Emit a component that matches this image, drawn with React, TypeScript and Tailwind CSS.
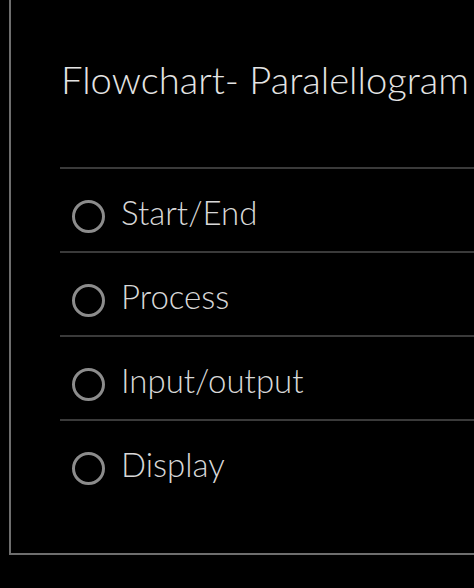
export default function App() {
  const items = ["Start/End", "Process", "Input/output", "Display"];

  return (
    <div className="h-[588px] w-[474px] overflow-hidden bg-black font-['Lato','Liberation_Sans',sans-serif]">
      <div className="ml-[9px] h-[555px] w-[600px] border-b-2 border-l-2 border-[#6e6e6e]">
        <div className="pl-[50px] pt-[60px]">
          <h1 className="whitespace-nowrap text-[38.2px] font-light leading-none text-[#e4e4e4]">
            Flowchart- Paralellogram
          </h1>
        </div>
        <ul className="ml-[49px] mt-[69px]">
          {items.map((label) => (
            <li
              key={label}
              className="flex h-[84px] items-center gap-[16px] border-t-2 border-[#3a3a3a] pl-[12px] pt-[12px]"
            >
              <span className="h-[33px] w-[33px] shrink-0 rounded-full border-[3px] border-[#8c8c8c]" />
              <span className="-mt-[7px] text-[33px] font-light leading-none text-[#d8d8d8]">
                {label}
              </span>
            </li>
          ))}
        </ul>
      </div>
    </div>
  );
}
